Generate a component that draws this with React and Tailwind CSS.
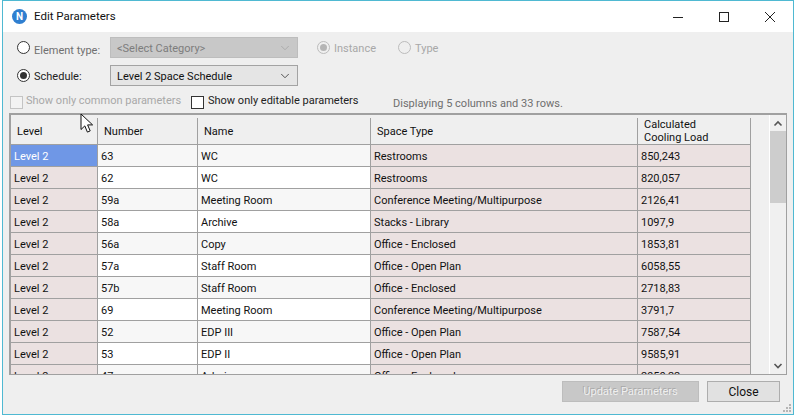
import { ChevronDown } from 'lucide-react'

const ROWS = [
  ['Level 2', '63', 'WC', 'Restrooms', '850,243'],
  ['Level 2', '62', 'WC', 'Restrooms', '820,057'],
  ['Level 2', '59a', 'Meeting Room', 'Conference Meeting/Multipurpose', '2126,41'],
  ['Level 2', '58a', 'Archive', 'Stacks - Library', '1097,9'],
  ['Level 2', '56a', 'Copy', 'Office - Enclosed', '1853,81'],
  ['Level 2', '57a', 'Staff Room', 'Office - Open Plan', '6058,55'],
  ['Level 2', '57b', 'Staff Room', 'Office - Enclosed', '2718,83'],
  ['Level 2', '69', 'Meeting Room', 'Conference Meeting/Multipurpose', '3791,7'],
  ['Level 2', '52', 'EDP III', 'Office - Open Plan', '7587,54'],
  ['Level 2', '53', 'EDP II', 'Office - Open Plan', '9585,91'],
  ['Level 2', '47', 'Admin', 'Office - Enclosed', '2950,22'],
]

const COLS = 'grid grid-cols-[87px_100px_173px_267px_113px]'

function Radio({ checked, disabled }) {
  return (
    <span className={`w-[13px] h-[13px] rounded-full border flex items-center justify-center shrink-0 ${disabled ? 'border-[#bcbcbc] bg-[#efefef]' : 'border-[#333] bg-white'}`}>
      {checked && <span className={`w-[7px] h-[7px] rounded-full ${disabled ? 'bg-[#b5b5b5]' : 'bg-[#333]'}`} />}
    </span>
  )
}

function Select({ value, disabled }) {
  return (
    <div className={`w-[188px] h-[21px] border flex items-center justify-between pl-[6px] pr-[5px] shrink-0 ${disabled ? 'bg-[#c8c8c8] border-[#bdbdbd] text-[#7d7d7d]' : 'bg-[#e5e5e5] border-[#a3a3a3] text-[#111]'}`}>
      <span className="mt-px">{value}</span>
      <ChevronDown size={14} strokeWidth={1.4} className={disabled ? 'text-[#a5a5a5]' : 'text-[#333]'} />
    </div>
  )
}

function HeaderCell({ children }) {
  return (
    <div className="h-[29px] flex items-center relative">
      <span className="ml-[6px] mt-[3px] leading-[13px]">{children}</span>
      <span className="absolute right-0 top-[3px] bottom-0 w-px bg-[#a0a0a0]" />
    </div>
  )
}

function Row({ row, index }) {
  const stripe = index % 2 === 0 ? 'bg-[#f7f7f7]' : 'bg-white'
  const pink = 'bg-[#ebe1e1]'
  const cell = 'h-[22px] pl-[3px] pt-px flex items-center border-b border-r border-[#a0a0a0] text-[#111] overflow-hidden'
  return (
    <div className={COLS}>
      <div className={`${cell} ${index === 0 ? 'bg-[#6f97e6] text-white' : pink}`}>{row[0]}</div>
      <div className={`${cell} ${stripe}`}>{row[1]}</div>
      <div className={`${cell} ${stripe}`}>{row[2]}</div>
      <div className={`${cell} ${pink}`}>{row[3]}</div>
      <div className={`${cell} ${pink}`}>{row[4]}</div>
    </div>
  )
}

export default function App() {
  return (
    <div className="w-[795px] h-[416px] bg-white pl-[2px] pr-px pb-px font-['Roboto',sans-serif] text-[11px] leading-none whitespace-nowrap overflow-hidden">
      <div className="h-full border border-[#4fb9d2] flex flex-col bg-[#efefef] relative">
        {/* Title bar */}
        <div className="h-[31px] bg-white flex items-center shrink-0">
          <span className="ml-[9px] w-[15px] h-[15px] rounded-full bg-[#2f7fd0] text-white text-[10px] font-bold flex items-center justify-center">N</span>
          <span className="ml-[7px] mt-px text-[#111] text-[11.5px]">Edit Parameters</span>
          <div className="ml-auto flex items-center text-[#222]">
            <svg width="46" height="16" viewBox="0 0 46 16"><path d="M18 8.5h10" stroke="currentColor" fill="none" /></svg>
            <svg width="46" height="16" viewBox="0 0 46 16"><rect x="18.5" y="3.5" width="9" height="9" stroke="currentColor" fill="none" /></svg>
            <svg width="46" height="16" viewBox="0 0 46 16"><path d="M18 3l10 10M28 3L18 13" stroke="currentColor" fill="none" /></svg>
          </div>
        </div>

        {/* Selector rows */}
        <div className="pl-[14px] pt-[5px] flex items-center">
          <Radio />
          <span className="ml-[4px] mt-[5px] w-[76px] text-[#707070]">Element type:</span>
          <Select value="<Select Category>" disabled />
          <span className="ml-[19px]"><Radio checked disabled /></span>
          <span className="ml-[4px] mt-px w-[64px] text-[#a8a8a8]">Instance</span>
          <Radio disabled />
          <span className="ml-[4px] mt-px text-[#a8a8a8]">Type</span>
        </div>
        <div className="pl-[14px] mt-[7px] flex items-center">
          <Radio checked />
          <span className="ml-[4px] mt-[2px] w-[76px] text-[#222]">Schedule:</span>
          <Select value="Level 2 Space Schedule" />
        </div>

        {/* Checkbox row */}
        <div className="h-[27px] pl-[7px] pt-[10px] flex items-start shrink-0">
          <span className="w-[13px] h-[13px] border border-[#c4c4c4] bg-[#f3f3f3] shrink-0" />
          <span className="ml-[3px] -mt-px w-[165px] text-[#a8a8a8]">Show only common parameters</span>
          <span className="w-[13px] h-[13px] border border-[#333] bg-white shrink-0" />
          <span className="ml-[4px] -mt-px w-[185px] text-[#222]">Show only editable parameters</span>
          <span className="mt-[2px] text-[#6e6e6e]">Displaying 5 columns and 33 rows.</span>
        </div>

        {/* Grid */}
        <div className="mx-[6px] h-[262px] border-2 border-b border-r border-[#a0a0a0] bg-[#f0f0f0] flex overflow-hidden shrink-0">
          <div className="w-[740px] shrink-0">
            <div className={`${COLS} border-b border-[#a0a0a0] bg-[#efefef] text-[#111]`}>
              <HeaderCell>Level</HeaderCell>
              <HeaderCell>Number</HeaderCell>
              <HeaderCell>Name</HeaderCell>
              <HeaderCell>Space Type</HeaderCell>
              <HeaderCell>Calculated<br />Cooling Load</HeaderCell>
            </div>
            {ROWS.map((row, i) => <Row key={i} row={row} index={i} />)}
          </div>
          <div className="ml-auto w-[17px] border-l border-white flex flex-col items-center shrink-0">
            <svg className="h-[16px] shrink-0" width="12" height="16" viewBox="0 0 12 16"><path d="M2.5 10.5L6 7l3.5 3.5" stroke="#555" strokeWidth="1.6" fill="none" /></svg>
            <div className="w-full h-[72px] bg-[#cdcdcd]" />
            <div className="flex-1" />
            <svg className="h-[16px] shrink-0" width="12" height="16" viewBox="0 0 12 16"><path d="M2.5 6L6 9.5 9.5 6" stroke="#555" strokeWidth="1.6" fill="none" /></svg>
          </div>
        </div>

        {/* Footer */}
        <div className="mt-[6px] pr-[13px] flex justify-end gap-[8px]">
          <button className="w-[137px] h-[21px] bg-[#c8c8c8] border border-[#bdbdbd] text-[#efefef] [text-shadow:-1px_-1px_0_#a8a8a8]">Update Parameters</button>
          <button className="w-[73px] h-[21px] bg-[#e1e1e1] border border-[#adadad] text-[#111] text-[12px]">Close</button>
        </div>

        {/* Resize grip */}
        <svg className="absolute right-px bottom-px" width="9" height="9" viewBox="0 0 9 9" fill="#b5b5b5">
          <rect x="6" y="0" width="2" height="2" />
          <rect x="3" y="3" width="2" height="2" />
          <rect x="6" y="3" width="2" height="2" />
          <rect x="0" y="6" width="2" height="2" />
          <rect x="3" y="6" width="2" height="2" />
          <rect x="6" y="6" width="2" height="2" />
        </svg>

        {/* Mouse cursor */}
        <svg className="absolute left-[77px] top-[112px]" width="14" height="21" viewBox="0 0 14 21">
          <path d="M1 1v15.5l3.8-3.6 2.6 6.2 2.8-1.2-2.6-6h5L1 1z" fill="#fff" stroke="#111" strokeWidth="1" />
        </svg>
      </div>
    </div>
  )
}
